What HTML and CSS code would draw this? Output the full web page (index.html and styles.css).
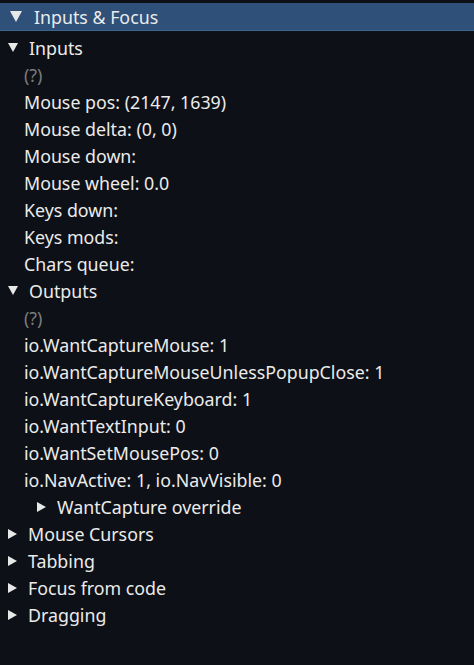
FILE: index.html
```html
<!DOCTYPE html>
<html>
<head>
<meta charset="utf-8">
<link rel="stylesheet" href="styles.css">
</head>
<body>
<div class="win">
  <div class="header">
    <svg class="arrow-big" width="12" height="11" viewBox="0 0 12 11"><polygon points="0,0 12,0 6,11" fill="#e8e8e8"/></svg>
    <span>Inputs &amp; Focus</span>
  </div>
  <div class="tree">
    <div class="row node"><svg class="arr" width="10" height="9" viewBox="0 0 10 9"><polygon points="0,0 10,0 5,9" fill="#e8e8e8"/></svg><span>Inputs</span></div>
    <div class="row item dim">(?)</div>
    <div class="row item">Mouse pos: (2147, 1639)</div>
    <div class="row item">Mouse delta: (0, 0)</div>
    <div class="row item">Mouse down:</div>
    <div class="row item">Mouse wheel: 0.0</div>
    <div class="row item">Keys down:</div>
    <div class="row item">Keys mods:</div>
    <div class="row item">Chars queue:</div>
    <div class="row node"><svg class="arr" width="10" height="9" viewBox="0 0 10 9"><polygon points="0,0 10,0 5,9" fill="#e8e8e8"/></svg><span>Outputs</span></div>
    <div class="row item dim">(?)</div>
    <div class="row item">io.WantCaptureMouse: 1</div>
    <div class="row item">io.WantCaptureMouseUnlessPopupClose: 1</div>
    <div class="row item">io.WantCaptureKeyboard: 1</div>
    <div class="row item">io.WantTextInput: 0</div>
    <div class="row item">io.WantSetMousePos: 0</div>
    <div class="row item">io.NavActive: 1, io.NavVisible: 0</div>
    <div class="row node sub"><svg class="arr" width="9" height="10" viewBox="0 0 9 10"><polygon points="0,0 9,5 0,10" fill="#e8e8e8"/></svg><span>WantCapture override</span></div>
    <div class="row node"><svg class="arr" width="9" height="10" viewBox="0 0 9 10"><polygon points="0,0 9,5 0,10" fill="#e8e8e8"/></svg><span>Mouse Cursors</span></div>
    <div class="row node"><svg class="arr" width="9" height="10" viewBox="0 0 9 10"><polygon points="0,0 9,5 0,10" fill="#e8e8e8"/></svg><span>Tabbing</span></div>
    <div class="row node"><svg class="arr" width="9" height="10" viewBox="0 0 9 10"><polygon points="0,0 9,5 0,10" fill="#e8e8e8"/></svg><span>Focus from code</span></div>
    <div class="row node"><svg class="arr" width="9" height="10" viewBox="0 0 9 10"><polygon points="0,0 9,5 0,10" fill="#e8e8e8"/></svg><span>Dragging</span></div>
  </div>
</div>
</body>
</html>
```
FILE: styles.css
```css
html, body {
  margin: 0;
  padding: 0;
  background: #0d1016;
  height: 100%;
}
.win {
  font-family: "Noto Sans", "Open Sans", sans-serif;
  font-size: 17.8px;
  color: #ebebeb;
  padding-top: 3px;
}
.header {
  height: 27px;
  background: #2e5079;
  border-bottom: 1px solid #3d6590;
  display: flex;
  align-items: center;
  padding-left: 10px;
}
.header span {
  margin-left: 12px;
}
.tree {
  padding-top: 3px;
}
.row {
  height: 27px;
  display: flex;
  align-items: center;
  white-space: nowrap;
}
.node {
  padding-left: 8px;
}
.node .arr {
  flex: none;
}
.node span {
  margin-left: 11px;
}
.node.sub {
  padding-left: 37px;
}
.item {
  padding-left: 24px;
}
.dim {
  color: #7c7c7c;
}
```
